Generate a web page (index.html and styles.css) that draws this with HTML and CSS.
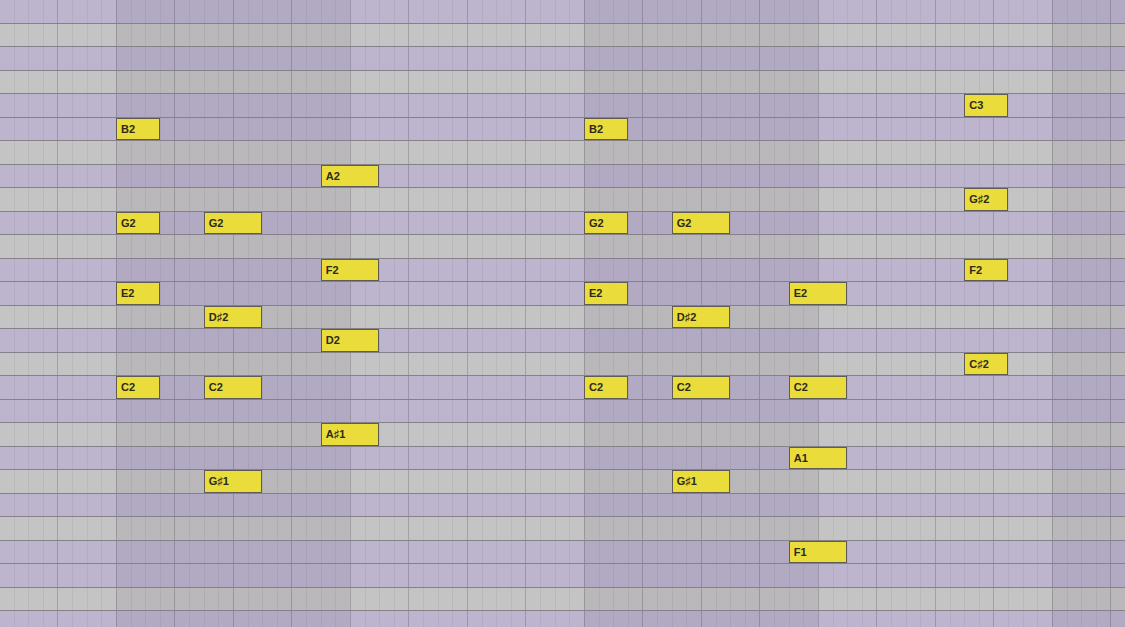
FILE: index.html
```html
<!DOCTYPE html>
<html lang="en">
<head>
  <meta charset="UTF-8" />
  <title>Piano Roll</title>
  <link rel="stylesheet" href="styles.css">
</head>
<body>

<!-- Piano roll: one row per key, notes placed on the 1/16 grid -->
<div class="roll">
  <div class="row white"></div>
  <div class="row black"></div>
  <div class="row white"></div>
  <div class="row black"></div>
  <div class="row white">
    <span class="note" style="grid-column: 67 / span 3">C3</span>
  </div>
  <div class="row white">
    <span class="note" style="grid-column: 9 / span 3">B2</span>
    <span class="note" style="grid-column: 41 / span 3">B2</span>
  </div>
  <div class="row black"></div>
  <div class="row white">
    <span class="note" style="grid-column: 23 / span 4">A2</span>
  </div>
  <div class="row black">
    <span class="note" style="grid-column: 67 / span 3">G♯2</span>
  </div>
  <div class="row white">
    <span class="note" style="grid-column: 9 / span 3">G2</span>
    <span class="note" style="grid-column: 15 / span 4">G2</span>
    <span class="note" style="grid-column: 41 / span 3">G2</span>
    <span class="note" style="grid-column: 47 / span 4">G2</span>
  </div>
  <div class="row black"></div>
  <div class="row white">
    <span class="note" style="grid-column: 23 / span 4">F2</span>
    <span class="note" style="grid-column: 67 / span 3">F2</span>
  </div>
  <div class="row white">
    <span class="note" style="grid-column: 9 / span 3">E2</span>
    <span class="note" style="grid-column: 41 / span 3">E2</span>
    <span class="note" style="grid-column: 55 / span 4">E2</span>
  </div>
  <div class="row black">
    <span class="note" style="grid-column: 15 / span 4">D♯2</span>
    <span class="note" style="grid-column: 47 / span 4">D♯2</span>
  </div>
  <div class="row white">
    <span class="note" style="grid-column: 23 / span 4">D2</span>
  </div>
  <div class="row black">
    <span class="note" style="grid-column: 67 / span 3">C♯2</span>
  </div>
  <div class="row white">
    <span class="note" style="grid-column: 9 / span 3">C2</span>
    <span class="note" style="grid-column: 15 / span 4">C2</span>
    <span class="note" style="grid-column: 41 / span 3">C2</span>
    <span class="note" style="grid-column: 47 / span 4">C2</span>
    <span class="note" style="grid-column: 55 / span 4">C2</span>
  </div>
  <div class="row white"></div>
  <div class="row black">
    <span class="note" style="grid-column: 23 / span 4">A♯1</span>
  </div>
  <div class="row white">
    <span class="note" style="grid-column: 55 / span 4">A1</span>
  </div>
  <div class="row black">
    <span class="note" style="grid-column: 15 / span 4">G♯1</span>
    <span class="note" style="grid-column: 47 / span 4">G♯1</span>
  </div>
  <div class="row white"></div>
  <div class="row black"></div>
  <div class="row white">
    <span class="note" style="grid-column: 55 / span 4">F1</span>
  </div>
  <div class="row white"></div>
  <div class="row black"></div>
  <div class="row white"></div>
</div>

</body>
</html>
```

FILE: styles.css
```css
html, body {
  margin: 0;
  padding: 0;
  overflow: hidden;
  background: #bcb4cc;
}

.roll {
  display: flex;
  flex-direction: column;
  width: 1141px;
  margin: -1px 0 0 -1px;
}

.row {
  display: grid;
  grid-template-columns: repeat(78, 14.625px);
  flex: none;
  height: 23.5px;
  box-sizing: border-box;
  border-top: 1px solid #85818b;
  /* beat lines, 1/16 lines, darker bar bands */
  background-image:
    repeating-linear-gradient(90deg, rgba(0, 0, 0, 0.13) 0 1px, transparent 1px 58.5px),
    repeating-linear-gradient(90deg, rgba(0, 0, 0, 0.055) 0 1px, transparent 1px 14.625px),
    repeating-linear-gradient(90deg, transparent 0 117px, rgba(30, 10, 40, 0.065) 117px 351px, transparent 351px 468px);
}

.white {
  background-color: #bdb5cd;
}

.black {
  background-color: #c4c4c4;
}

.note {
  grid-row: 1;
  box-sizing: border-box;
  height: 22.5px;
  padding: 0 0 0 4px;
  background: #e9dc3b;
  border: 1px solid #5e5c55;
  font-family: "Liberation Sans", Arial, sans-serif;
  font-size: 11px;
  font-weight: 600;
  line-height: 20px;
  color: #2c2a1c;
  white-space: nowrap;
  overflow: hidden;
}
```
